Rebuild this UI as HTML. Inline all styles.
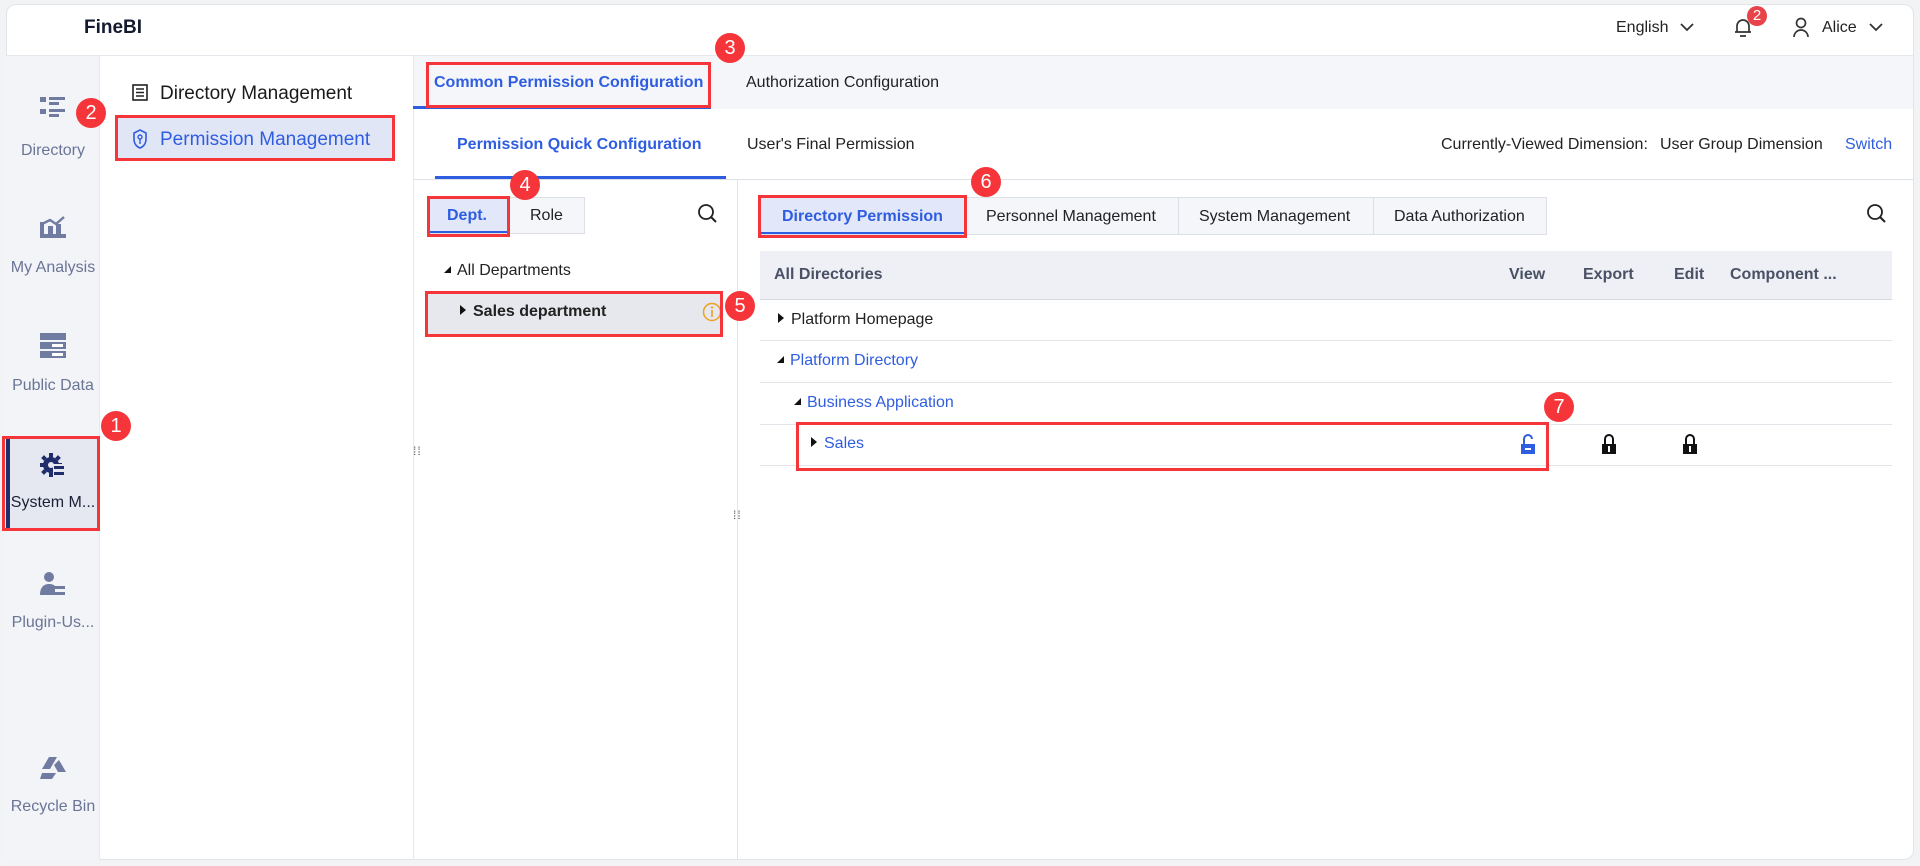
<!DOCTYPE html>
<html><head><meta charset="utf-8"><style>
*{box-sizing:border-box;margin:0;padding:0}
body{width:1920px;height:866px;background:#f2f3f5;font-family:"Liberation Sans",sans-serif;position:relative;overflow:hidden;color:#222}
.a{position:absolute;white-space:nowrap}
.card{position:absolute;left:6px;top:4px;width:1908px;height:856px;background:#fff;border-radius:10px;border:1px solid #e2e4e8;overflow:hidden}
.t{font-size:16px;line-height:20px}
.side{color:#6a7596;font-size:16px;text-align:center;width:94px;left:6px}
.rb{position:absolute;border:3px solid #f5353a}
.num{position:absolute;width:30px;height:30px;border-radius:50%;background:#f5353a;color:#fff;font-size:20px;line-height:30px;text-align:center}
.blue{color:#2f5de0}
.tri{display:inline-block;width:0;height:0;border-top:5px solid transparent;border-bottom:5px solid transparent;border-left:6px solid #111;margin-right:7px;vertical-align:1px}
.trid{display:inline-block;width:0;height:0;border-left:7px solid transparent;border-bottom:7px solid #111;margin-right:6px;vertical-align:2px}
.hl{position:absolute;height:1px;background:#e3e5ea}
</style></head><body>
<div class="card"></div>
<!-- header -->
<div class="a" style="left:84px;top:17px;font-size:19px;font-weight:bold;color:#141a2e">FineBI</div>
<div class="a t" style="left:1616px;top:18px;color:#222">English</div>
<svg class="a" style="left:1679px;top:21px" width="16" height="12"><path d="M2 3l6 6 6-6" stroke="#333" stroke-width="1.8" fill="none"/></svg>
<svg class="a" style="left:1732px;top:16px" width="22" height="22"><path d="M5 16V10a6 6 0 0 1 12 0v6M3 16h16M8 20h6" stroke="#333" stroke-width="1.7" fill="none"/></svg>
<div class="a" style="left:1747px;top:6px;width:20px;height:20px;border-radius:50%;background:#e8434a;color:#fff;font-size:15px;text-align:center;line-height:20px">2</div>
<svg class="a" style="left:1792px;top:17px" width="18" height="22"><circle cx="9" cy="6" r="4.5" stroke="#333" stroke-width="1.7" fill="none"/><path d="M2 20a7 7 0 0 1 14 0" stroke="#333" stroke-width="1.7" fill="none"/></svg>
<div class="a t" style="left:1822px;top:18px">Alice</div>
<svg class="a" style="left:1868px;top:21px" width="16" height="12"><path d="M2 3l6 6 6-6" stroke="#333" stroke-width="1.8" fill="none"/></svg>
<div class="a" style="left:6px;top:55px;width:1908px;height:1px;background:#e6e8ee"></div>
<!-- sidebar -->
<div class="a" style="left:6px;top:56px;width:94px;height:804px;background:#f3f4f8;border-right:1px solid #e6e8ee"></div>
<svg class="a" style="left:40px;top:97px" width="26" height="24" fill="#6f7ba0"><rect x="0" y="0" width="6" height="5"/><rect x="9" y="0" width="16" height="3"/><rect x="9" y="5" width="10" height="3"/><rect x="0" y="12" width="6" height="5"/><rect x="9" y="12" width="16" height="3"/><rect x="9" y="17" width="10" height="3"/></svg>
<div class="a side" style="top:142px">Directory</div>
<svg class="a" style="left:40px;top:216px" width="26" height="24" fill="#6f7ba0"><rect x="0" y="18" width="26" height="4"/><rect x="0" y="6" width="4" height="14"/><rect x="8" y="10" width="5" height="10"/><rect x="16" y="8" width="5" height="12"/><path d="M2 8l8-4 6 4 8-7" stroke="#6f7ba0" stroke-width="2.4" fill="none"/></svg>
<div class="a side" style="top:259px">My Analysis</div>
<svg class="a" style="left:40px;top:333px" width="26" height="26"><rect x="0" y="0" width="26" height="7" fill="#6f7ba0"/><rect x="0" y="9" width="26" height="7" fill="#6f7ba0"/><rect x="0" y="18" width="26" height="7" fill="#6f7ba0"/><rect x="12" y="11" width="11" height="3" fill="#fff"/><rect x="12" y="20" width="11" height="3" fill="#fff"/></svg>
<div class="a side" style="top:377px">Public Data</div>
<div class="a" style="left:6px;top:436px;width:94px;height:95px;background:#e6e8f1"></div>
<div class="a" style="left:6px;top:436px;width:4px;height:95px;background:#1f2d6b"></div>
<svg class="a" style="left:40px;top:453px" width="26" height="24"><circle cx="11" cy="12" r="8" fill="#1f2d6b"/><g fill="#1f2d6b"><rect x="9" y="0" width="4" height="24"/><rect x="0" y="10" width="22" height="4"/><rect x="2" y="3" width="4" height="4" transform="rotate(45 4 5)"/><rect x="2" y="17" width="4" height="4" transform="rotate(45 4 19)"/><rect x="16" y="3" width="4" height="4" transform="rotate(45 18 5)"/></g><circle cx="11" cy="12" r="3" fill="#e6e8f1"/><rect x="13" y="11" width="13" height="13" fill="#e6e8f1"/><rect x="14" y="13" width="10" height="3" fill="#1f2d6b"/><rect x="14" y="19" width="10" height="3" fill="#1f2d6b"/></svg>
<div class="a side" style="top:494px;color:#1a1f35">System M...</div>
<svg class="a" style="left:40px;top:571px" width="26" height="26" fill="#6f7ba0"><circle cx="9" cy="6" r="5"/><path d="M0 24c0-8 4-11 9-11 3 0 5 1 6 2v9z"/><rect x="15" y="15" width="10" height="3"/><rect x="15" y="21" width="10" height="3"/></svg>
<div class="a side" style="top:614px">Plugin-Us...</div>
<svg class="a" style="left:40px;top:757px" width="26" height="22" fill="#6f7ba0"><path d="M9 0h8l-7 12h-8zM19 3l7 12h-8l-4-7zM2 16h14l-4 6H0z"/></svg>
<div class="a side" style="top:798px">Recycle Bin</div>
<!-- second panel -->
<div class="a" style="left:413px;top:56px;width:1px;height:804px;background:#e6e8ee"></div>
<svg class="a" style="left:132px;top:84px" width="16" height="17"><rect x="1" y="1" width="14" height="15" stroke="#222" stroke-width="1.6" fill="none"/><path d="M4 5h8M4 8.5h8M4 12h8" stroke="#222" stroke-width="1.4"/></svg>
<div class="a" style="left:160px;top:83px;font-size:19px;color:#1a1a1a">Directory Management</div>
<div class="a" style="left:116px;top:116px;width:278px;height:45px;background:#e1e6f7"></div>
<svg class="a" style="left:132px;top:129px" width="16" height="20"><path d="M8 1l6 3v6c0 5-3 8-6 9-3-1-6-4-6-9V4z" stroke="#2f5de0" stroke-width="1.6" fill="none"/><circle cx="8" cy="8" r="2" stroke="#2f5de0" stroke-width="1.4" fill="none"/><path d="M8 10v5" stroke="#2f5de0" stroke-width="1.4"/></svg>
<div class="a blue" style="left:160px;top:129px;font-size:19px">Permission Management</div>
<!-- main top tabs -->
<div class="a" style="left:414px;top:56px;width:1499px;height:53px;background:#f5f6fa"></div>
<div class="a" style="left:413px;top:106px;width:298px;height:3px;background:#2f5de0"></div>
<div class="a t blue" style="left:434px;top:73px;font-weight:bold">Common Permission Configuration</div>
<div class="a t" style="left:746px;top:73px">Authorization Configuration</div>
<div class="a t blue" style="left:457px;top:135px;font-weight:bold">Permission Quick Configuration</div>
<div class="a" style="left:435px;top:176px;width:291px;height:3px;background:#2f5de0"></div>
<div class="a t" style="left:747px;top:135px">User's Final Permission</div>
<div class="a t" style="left:1441px;top:135px">Currently-Viewed Dimension:</div>
<div class="a t" style="left:1660px;top:135px">User Group Dimension</div>
<div class="a t blue" style="left:1845px;top:135px">Switch</div>
<div class="hl" style="left:413px;top:179px;width:1500px;background:#dde0e6"></div>
<div class="a" style="left:737px;top:180px;width:1px;height:680px;background:#e3e5ea"></div>
<!-- left pane -->
<div class="a" style="left:428px;top:197px;width:157px;height:37px;border:1px solid #dcdfe6;background:#f5f6fa"></div>
<div class="a" style="left:429px;top:198px;width:80px;height:35px;background:#e2e8fa;border-bottom:2px solid #2f5de0"></div>
<div class="a t blue" style="left:447px;top:206px;font-weight:bold">Dept.</div>
<div class="a t" style="left:530px;top:206px">Role</div>
<svg class="a" style="left:697px;top:203px" width="22" height="22"><circle cx="9" cy="9" r="7" stroke="#222" stroke-width="1.8" fill="none"/><path d="M14 14l5 5" stroke="#222" stroke-width="2"/></svg>
<div class="a t" style="left:444px;top:261px"><span class="trid"></span>All Departments</div>
<div class="a" style="left:425px;top:291px;width:297px;height:45px;background:#e6e8ee"></div>
<div class="a t" style="left:460px;top:302px;font-weight:bold"><span class="tri"></span>Sales department</div>
<svg class="a" style="left:702px;top:302px" width="20" height="20"><circle cx="10" cy="10" r="8.5" stroke="#f0a020" stroke-width="1.5" fill="none"/><path d="M10 8v7" stroke="#f0a020" stroke-width="1.6"/><circle cx="10" cy="5.5" r="1.1" fill="#f0a020"/></svg>
<div class="a" style="left:413px;top:448px;font-size:12px;line-height:6px;color:#555;letter-spacing:1px">⁞⁞</div>
<div class="a" style="left:733px;top:512px;font-size:12px;line-height:6px;color:#555;letter-spacing:1px">⁞⁞</div>
<!-- right pane tabs -->
<div class="a" style="left:760px;top:197px;width:787px;height:38px;border:1px solid #dcdfe6;background:#f5f6fa"></div>
<div class="a" style="left:761px;top:198px;width:205px;height:36px;background:#e2e8fa;border-bottom:2px solid #2f5de0"></div>
<div class="a" style="left:1178px;top:198px;width:1px;height:36px;background:#dcdfe6"></div>
<div class="a" style="left:1373px;top:198px;width:1px;height:36px;background:#dcdfe6"></div>
<div class="a" style="left:966px;top:198px;width:1px;height:36px;background:#dcdfe6"></div>
<div class="a t blue" style="left:782px;top:207px;font-weight:bold">Directory Permission</div>
<div class="a t" style="left:986px;top:207px">Personnel Management</div>
<div class="a t" style="left:1199px;top:207px">System Management</div>
<div class="a t" style="left:1394px;top:207px">Data Authorization</div>
<svg class="a" style="left:1866px;top:203px" width="22" height="22"><circle cx="9" cy="9" r="7" stroke="#222" stroke-width="1.8" fill="none"/><path d="M14 14l5 5" stroke="#222" stroke-width="2"/></svg>
<!-- table -->
<div class="a" style="left:760px;top:251px;width:1132px;height:49px;background:#eef0f5;border-bottom:1px solid #d5d8df"></div>
<div class="a t" style="left:774px;top:265px;color:#4a5166;font-weight:bold">All Directories</div>
<div class="a t" style="left:1509px;top:265px;color:#4a5166;font-weight:bold">View</div>
<div class="a t" style="left:1583px;top:265px;color:#4a5166;font-weight:bold">Export</div>
<div class="a t" style="left:1674px;top:265px;color:#4a5166;font-weight:bold">Edit</div>
<div class="a t" style="left:1730px;top:265px;color:#4a5166;font-weight:bold">Component ...</div>
<div class="a t" style="left:778px;top:310px"><span class="tri"></span>Platform Homepage</div>
<div class="hl" style="left:760px;top:340px;width:1132px"></div>
<div class="a t blue" style="left:777px;top:351px"><span class="trid"></span>Platform Directory</div>
<div class="hl" style="left:760px;top:382px;width:1132px"></div>
<div class="a t blue" style="left:794px;top:393px"><span class="trid"></span>Business Application</div>
<div class="hl" style="left:760px;top:424px;width:1132px"></div>
<div class="a t blue" style="left:811px;top:434px"><span class="tri"></span>Sales</div>
<div class="hl" style="left:760px;top:465px;width:1132px"></div>
<svg class="a" style="left:1520px;top:433px" width="16" height="22"><path d="M4 11V6a4 4 0 0 1 8 0" stroke="#2f5de0" stroke-width="2" fill="none"/><rect x="1" y="11" width="14" height="10" fill="#2f5de0"/><rect x="5" y="15" width="6" height="2" fill="#fff"/></svg>
<svg class="a" style="left:1601px;top:433px" width="16" height="22"><path d="M4 11V6a4 4 0 0 1 8 0v5" stroke="#111" stroke-width="2" fill="none"/><rect x="1" y="11" width="14" height="10" fill="#111"/><rect x="7" y="13" width="2" height="6" fill="#fff"/></svg>
<svg class="a" style="left:1682px;top:433px" width="16" height="22"><path d="M4 11V6a4 4 0 0 1 8 0v5" stroke="#111" stroke-width="2" fill="none"/><rect x="1" y="11" width="14" height="10" fill="#111"/><rect x="7" y="13" width="2" height="6" fill="#fff"/></svg>
<!-- annotations -->
<div class="rb" style="left:2px;top:436px;width:98px;height:95px"></div>
<div class="num" style="left:101px;top:411px">1</div>
<div class="rb" style="left:115px;top:115px;width:280px;height:46px"></div>
<div class="num" style="left:76px;top:98px">2</div>
<div class="rb" style="left:426px;top:62px;width:285px;height:46px"></div>
<div class="num" style="left:715px;top:33px">3</div>
<div class="rb" style="left:427px;top:196px;width:83px;height:41px"></div>
<div class="num" style="left:510px;top:170px">4</div>
<div class="rb" style="left:425px;top:291px;width:298px;height:46px"></div>
<div class="num" style="left:725px;top:291px">5</div>
<div class="rb" style="left:758px;top:195px;width:209px;height:43px"></div>
<div class="num" style="left:971px;top:167px">6</div>
<div class="rb" style="left:796px;top:422px;width:753px;height:49px"></div>
<div class="num" style="left:1544px;top:392px">7</div>
</body></html>
